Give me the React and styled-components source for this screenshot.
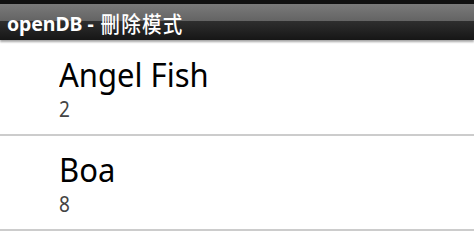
import React from "react";
import styled, { createGlobalStyle } from "styled-components";

const Global = createGlobalStyle`
  html, body {
    margin: 0;
    padding: 0;
    background: #ffffff;
  }
  body {
    font-family: "Noto Sans", "Open Sans", "Noto Sans CJK TC", sans-serif;
    overflow: hidden;
  }
`;

const Screen = styled.div`
  width: 474px;
  height: 248px;
  display: flex;
  flex-direction: column;
  background: #ffffff;
`;

const StatusStrip = styled.div`
  height: 4px;
  background: #111111;
  flex: none;
`;

const TitleBar = styled.div`
  height: 36px;
  flex: none;
  display: flex;
  align-items: center;
  padding-left: 7px;
  background: linear-gradient(
    to bottom,
    #7a7a7a 0%,
    #646464 46%,
    #2e2e2e 48%,
    #161616 100%
  );
  box-shadow: 0 2px 2px rgba(0, 0, 0, 0.35);
  position: relative;
  z-index: 1;
`;

const Title = styled.h1`
  margin: 0;
  color: #ffffff;
  font-family: "Noto Sans", "Open Sans", "Noto Sans CJK TC", sans-serif;
  font-size: 19.5px;
  font-weight: 700;
  letter-spacing: -0.1px;
  white-space: nowrap;
`;

const Mode = styled.span`
  display: inline-block;
  font-weight: 500;
  font-size: 19.5px;
  letter-spacing: 1.2px;
  margin-left: 2px;
  transform: scaleY(1.08);
`;

const List = styled.ul`
  list-style: none;
  margin: 0;
  padding: 0;
`;

const Row = styled.li`
  height: ${(p) => p.h}px;
  box-sizing: border-box;
  border-bottom: 2px solid #cccccc;
  padding-left: 59px;
  padding-top: ${(p) => p.top}px;
  display: flex;
  flex-direction: column;
`;

const Name = styled.div`
  font-size: 31px;
  line-height: 36px;
  color: #000000;
  transform: scaleY(1.06);
  transform-origin: left bottom;
`;

const Count = styled.div`
  margin-top: 6px;
  font-size: 19px;
  line-height: 22px;
  color: #444444;
  transform: scaleY(1.12);
  transform-origin: left bottom;
`;

const items = [
  { name: "Angel Fish", count: 2, h: 96, top: 17 },
  { name: "Boa", count: 8, h: 95, top: 16 },
];

export default function App() {
  return (
    <Screen>
      <Global />
      <StatusStrip />
      <TitleBar>
        <Title>
          openDB - <Mode>刪除模式</Mode>
        </Title>
      </TitleBar>
      <List>
        {items.map((it) => (
          <Row key={it.name} h={it.h} top={it.top}>
            <Name>{it.name}</Name>
            <Count>{it.count}</Count>
          </Row>
        ))}
      </List>
    </Screen>
  );
}
